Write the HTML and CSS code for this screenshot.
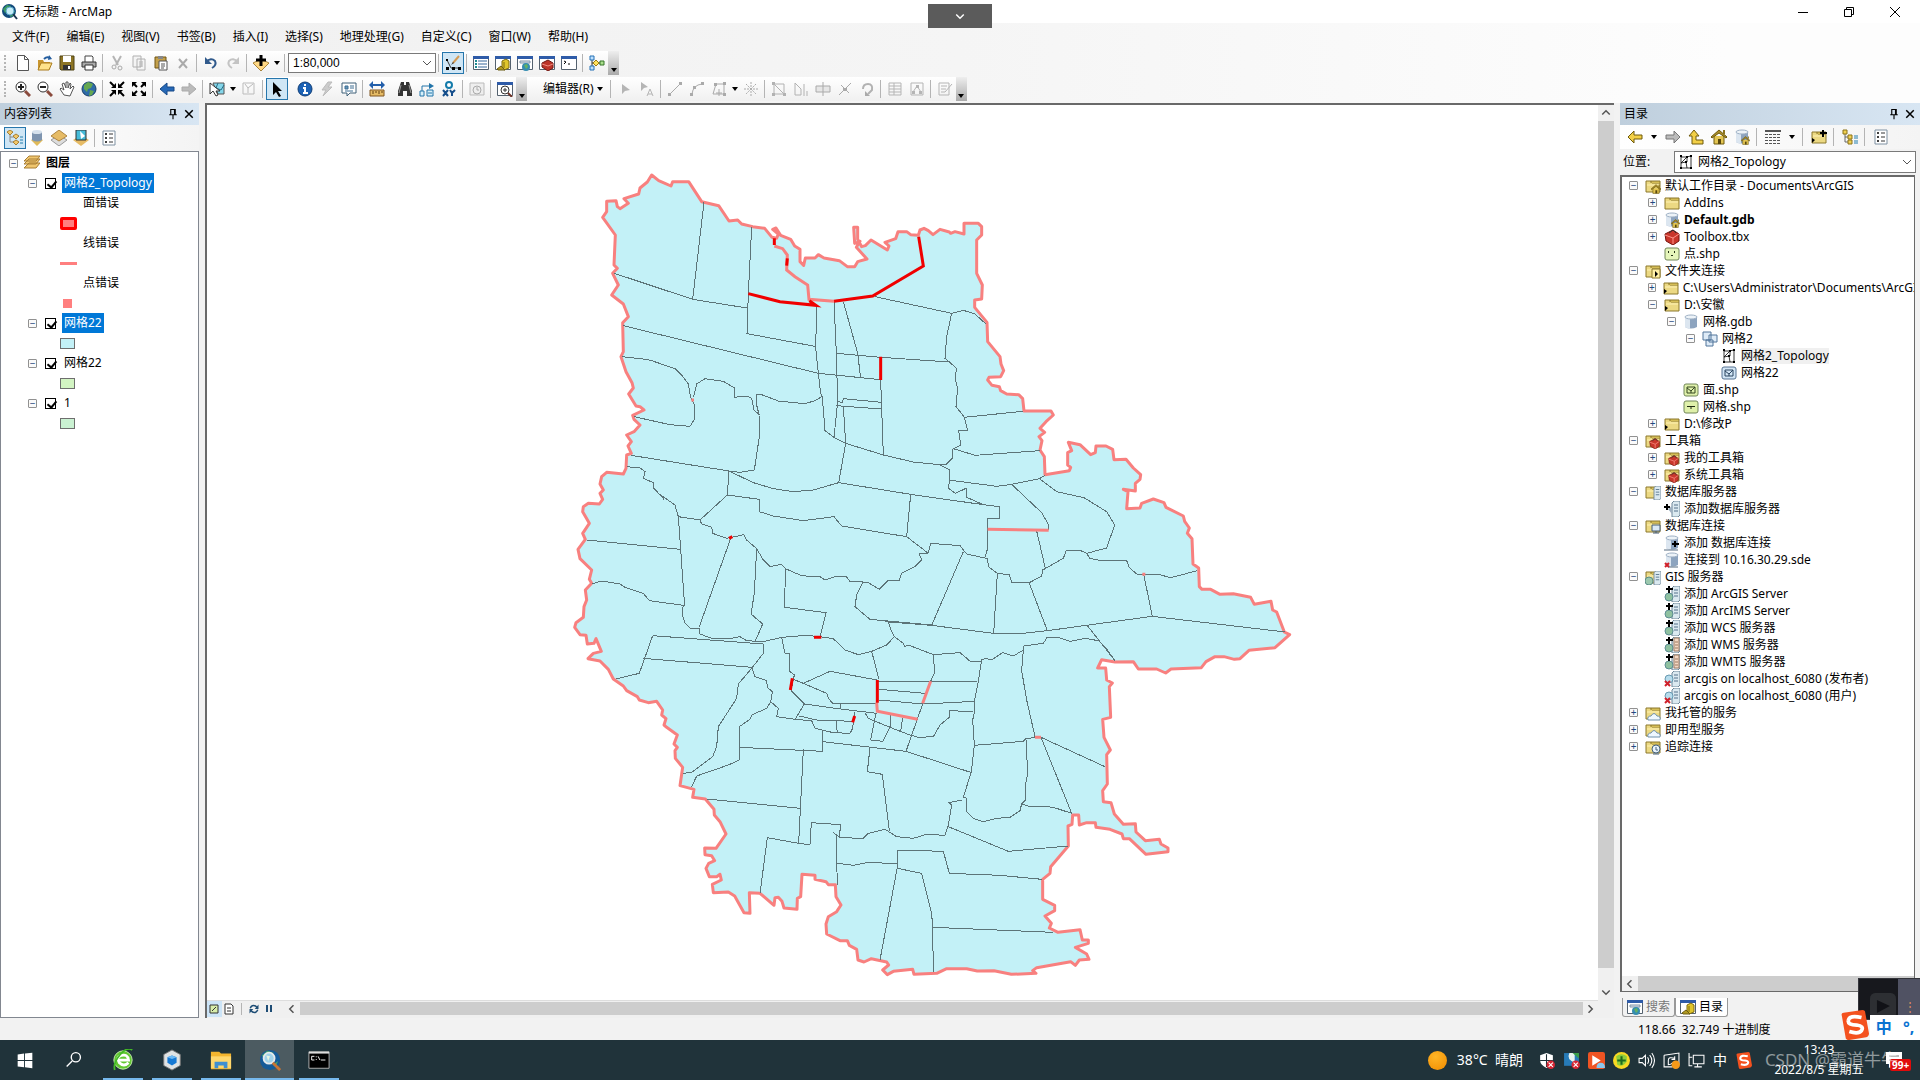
FILE: index.html
```html
<!DOCTYPE html>
<html lang="zh-CN">
<head>
    <meta charset="UTF-8">
    <meta name="viewport" content="width=device-width, initial-scale=1.0">
    <title>无标题 - ArcMap</title>
    <link rel="stylesheet" href="styles.css">
</head>
<body>
    <!-- Icon sprite -->
    <svg class="sprite" aria-hidden="true">
        <symbol id="i-app" viewBox="0 0 16 16"><circle cx="7" cy="7" r="7" fill="#124a7c"/><path d="M1 5l4-4 4 1-2 4-4 3zM9 9l4-2-2 5-3 1z" fill="#3b9a63"/><circle cx="8" cy="7" r="4" fill="#c5ecf8" stroke="#5aa7c8"/><path d="M11 10l4 5" stroke="#1b3550" stroke-width="2"/></symbol>
        <symbol id="i-new" viewBox="0 0 16 16"><path d="M2.500.5h7l4 4v11h-11zM9.500.5v4h4" fill="#fff" stroke="#555"/></symbol>
        <symbol id="i-open" viewBox="0 0 16 16"><path d="M1 14V5h5l1 2h6v7z" fill="#c9962e"/><path d="M1 15l3-7h11l-3 7z" fill="#ffe28a" stroke="#a97b1d"/><path d="M7 4q3-3 6-1" stroke="#235d9f" stroke-width="2" fill="none"/><path d="M12 0l3 4-4 1z" fill="#235d9f"/></symbol>
        <symbol id="i-save" viewBox="0 0 16 16"><path d="M1 1h14v14H2l-1-1z" fill="#8c7424" stroke="#4d4012"/><path d="M4 1h8v6H4z" fill="#fff"/><path d="M4 10h8v5H4z" fill="#333"/><path d="M9 11h2v3H9z" fill="#fff"/></symbol>
        <symbol id="i-print" viewBox="0 0 16 16"><path d="M4 1h7l1 1v6H4z" fill="#fff" stroke="#444"/><path d="M1 7h14v5H1z" fill="#a9a9a9" stroke="#333"/><path d="M4 10h8v5H4z" fill="#fff" stroke="#333"/></symbol>
        <symbol id="i-cut" viewBox="0 0 16 16"><path d="M4 1l5 9M12 1l-5 9" stroke="#b5b5b5" stroke-width="2"/><circle cx="5" cy="12" r="2" fill="none" stroke="#aaa"/><circle cx="11" cy="13" r="2" fill="none" stroke="#aaa"/></symbol>
        <symbol id="i-copy" viewBox="0 0 16 16"><path d="M2 1h8v11H2zM6 4h8v11H6z" fill="#f4f4f4" stroke="#b0b0b0"/><path d="M8 7h4M8 9h4M8 11h4" stroke="#b0b0b0"/></symbol>
        <symbol id="i-paste" viewBox="0 0 16 16"><path d="M2 2h11v11H2z" fill="#c3a04b" stroke="#705413"/><path d="M5 1h5v3H5z" fill="#888"/><path d="M6 6h8v9H6z" fill="#fff" stroke="#555"/><path d="M8 9h4M8 11h4M8 13h3" stroke="#555"/></symbol>
        <symbol id="i-del" viewBox="0 0 16 16"><path d="M4 4l8 9M12 4l-8 9" stroke="#aaa" stroke-width="2"/></symbol>
        <symbol id="i-undo" viewBox="0 0 16 16"><path d="M3 7q5-5 9-1 2 4-3 7" fill="none" stroke="#315a8c" stroke-width="2"/><path d="M2 2v7h7z" fill="#315a8c"/></symbol>
        <symbol id="i-redo" viewBox="0 0 16 16"><path d="M13 7q-5-5-9-1-2 4 3 7" fill="none" stroke="#c4c4c4" stroke-width="2"/><path d="M14 2v7H7z" fill="#c4c4c4"/></symbol>
        <symbol id="i-add" viewBox="0 0 16 16"><path d="M0 8l8-4 8 4-8 8z" fill="#ffd884" stroke="#a8833a"/><path d="M8 0v11M3 5h10" stroke="#000" stroke-width="3"/></symbol>
        <symbol id="i-edit" viewBox="0 0 16 16"><path d="M2 5l4 8h8" stroke="#333" fill="none"/><path d="M8 8l6-7" stroke="#d49b54" stroke-width="2"/><path d="M6 10l2-3 1 1z" fill="#333"/><path d="M1 4h2v2H1zM1 12h3v3H1zM7 12h3v3H7zM13 12h3v3h-3z"/></symbol>
        <symbol id="i-win" viewBox="0 0 16 16"><path d="M.5 1.500h15v13H.5z" fill="#fff" stroke="#54616e"/><path d="M0 1h16v3H0z" fill="#2e5ba8"/></symbol>
        <symbol id="i-toc" viewBox="0 0 16 16"><use href="#i-win"/><path d="M2 6h2M2 9h2M2 12h2" stroke="#208b92" stroke-width="2"/><path d="M5 6h9M5 9h9M5 12h9" stroke="#34669b"/></symbol>
        <symbol id="i-cat" viewBox="0 0 16 16"><use href="#i-win"/><path d="M7 6l4-2 3 2v7l-5 2-2-2z" fill="#e0c52b" stroke="#7d6a10"/><path d="M9 7v6" stroke="#7d6a10"/><path d="M2 14l4-3 4 4H3z" fill="#b29a21" stroke="#6b5c14"/></symbol>
        <symbol id="i-search" viewBox="0 0 16 16"><use href="#i-win"/><path d="M3 6h10v2H3z" fill="#dce5ef" stroke="#8193a6"/><circle cx="9" cy="12" r="4" fill="#358cb0"/><path d="M7 10l3-1 1 3-2 2z" fill="#65b261"/></symbol>
        <symbol id="i-boxwin" viewBox="0 0 16 16"><use href="#i-win"/><path d="M3 8l6-3 5 3v5l-5 3-6-4z" fill="#bd3328" stroke="#711610"/><path d="M3 9l6 2 5-2" fill="none" stroke="#f08c80"/></symbol>
        <symbol id="i-py" viewBox="0 0 16 16"><use href="#i-win"/><path d="M3 6l2 1-2 2M7 9h2" stroke="#000" fill="none"/></symbol>
        <symbol id="i-model" viewBox="0 0 16 16"><path d="M3 3v10M3 8h10" stroke="#333"/><path d="M1 1h4v4H1zM1 11h4v4H1z" fill="#bfe1ff" stroke="#2471b5"/><path d="M7 5l3 3-3 3-3-3z" fill="#ffe15b" stroke="#9b7b16"/><path d="M11 6h4v4h-4z" fill="#aadf8c" stroke="#36752a"/></symbol>
        <symbol id="i-zin" viewBox="0 0 16 16"><circle cx="6" cy="6" r="5" fill="#fff" stroke="#333"/><path d="M3 6h6M6 3v6" stroke="#222" stroke-width="2"/><path d="M10 10l5 5" stroke="#8a4a3c" stroke-width="3"/></symbol>
        <symbol id="i-zout" viewBox="0 0 16 16"><circle cx="6" cy="6" r="5" fill="#fff" stroke="#333"/><path d="M3 6h6" stroke="#222" stroke-width="2"/><path d="M10 10l5 5" stroke="#8a4a3c" stroke-width="3"/></symbol>
        <symbol id="i-hand" viewBox="0 0 16 16"><path d="M5 14L1 8l1-1 3 2-2-6 2-1 2 5V1h2v6l2-5 1 1-1 5 3-3 1 1-4 9z" fill="#fff" stroke="#555"/></symbol>
        <symbol id="i-globe" viewBox="0 0 16 16"><circle cx="8" cy="8" r="7" fill="#2e6ba8" stroke="#193e68"/><path d="M3 4l4-3 5 2-2 4-3 1-1 3-3-3zM9 9l4 1-2 4-3 1z" fill="#65a750"/></symbol>
        <symbol id="i-fin" viewBox="0 0 16 16"><path d="M1 1l5 5M15 1l-5 5M1 15l5-5M15 15l-5-5" stroke="#000" stroke-width="2"/><path d="M2 7h5V2zM9 2v5h5zM2 9h5v5zM9 14V9h5z"/></symbol>
        <symbol id="i-fout" viewBox="0 0 16 16"><path d="M2 2l4 4M14 2l-4 4M2 14l4-4M14 14l-4-4" stroke="#000" stroke-width="2"/><path d="M1 1h5L1 6zM10 1h5v5zM1 10v5h5zM15 10v5h-5z"/></symbol>
        <symbol id="i-back" viewBox="0 0 16 16"><path d="M1 8l7-6v4h7v4H8v4z" fill="#2769b7" stroke="#164987"/></symbol>
        <symbol id="i-fwd" viewBox="0 0 16 16"><path d="M15 8L8 2v4H1v4h7v4z" fill="#bbb" stroke="#aaa"/></symbol>
        <symbol id="i-sel" viewBox="0 0 16 16"><path d="M4 2h11v11H9z" fill="#84d6ea" stroke="#555"/><path d="M9 2l-2 5 5 2 3-5" stroke="#286d84" fill="none"/><path d="M1 2v11l3-3 3 5 2-1-2-4h4z" fill="#fff" stroke="#333"/></symbol>
        <symbol id="i-clr" viewBox="0 0 16 16"><path d="M2 2h11v11H2zM4 3l3 4 5-4M7 7v5" fill="none" stroke="#bbb"/></symbol>
        <symbol id="i-arrow" viewBox="0 0 16 16"><path d="M4 1v13l3-3 3 5 2-1-3-5h4z"/></symbol>
        <symbol id="i-info" viewBox="0 0 16 16"><circle cx="8" cy="8" r="7" fill="#1c62b5" stroke="#103d75"/><path d="M8 3v2M6 7h2v5M6 12h5" stroke="#fff" stroke-width="2" fill="none"/></symbol>
        <symbol id="i-bolt" viewBox="0 0 16 16"><path d="M9 1L3 9h4l-3 6 9-9H9l4-5z" fill="#ccc" stroke="#bbb"/></symbol>
        <symbol id="i-html" viewBox="0 0 16 16"><path d="M1 2h14v10H9l-3 3v-3H1z" fill="#fff" stroke="#3f6179"/><path d="M4 5h3v3H4zM9 5h4M9 7h4M4 10h8" fill="#6396bb" stroke="#3f6f93"/></symbol>
        <symbol id="i-meas" viewBox="0 0 16 16"><path d="M1 9h14v6H1z" fill="#e5bb65" stroke="#7f5520"/><path d="M4 10v3M7 10v2M10 10v3M13 10v2" stroke="#5e3c10"/><path d="M2 4h12" stroke="#225eaa" stroke-width="2"/><path d="M0 4l4-4v8zM16 4l-4-4v8z" fill="#225eaa"/></symbol>
        <symbol id="i-find" viewBox="0 0 16 16"><path d="M4 1h3v3h2V1h3l3 9v5h-5v-5H6v5H1v-5z" fill="#333"/><path d="M4 4l-2 8M12 4l2 8" stroke="#999"/></symbol>
        <symbol id="i-route" viewBox="0 0 16 16"><path d="M3 10V5h8" fill="none" stroke="#2274a9"/><path d="M10 2l5 3-5 3z" fill="#2274a9"/><path d="M1 10h4v5H1zM8 9h6v6H8z" fill="#d7f0fa" stroke="#2274a9"/><path d="M9 12h4" stroke="#2274a9"/></symbol>
        <symbol id="i-xy" viewBox="0 0 16 16"><circle cx="8" cy="4" r="3" fill="#fff" stroke="#147baa" stroke-width="2"/><path d="M2 9l5 6M7 9l-5 6M9 9l2 3 3-3M11 12v3" fill="none" stroke="#164f8c" stroke-width="2"/></symbol>
        <symbol id="i-time" viewBox="0 0 16 16"><path d="M1 2h14v12H1z" fill="#eee" stroke="#bbb"/><circle cx="8" cy="9" r="4" fill="none" stroke="#aaa"/><path d="M8 6v3h2" fill="none" stroke="#aaa"/></symbol>
        <symbol id="i-view" viewBox="0 0 16 16"><use href="#i-win"/><circle cx="8" cy="9" r="4" fill="#fff" stroke="#333"/><path d="M6 9h4M8 7v4" stroke="#333"/><path d="M11 12l4 4" stroke="#6d3328" stroke-width="2"/></symbol>
        <symbol id="i-g-arrow" viewBox="0 0 16 16"><path d="M5 3v10l3-3 5-1z" fill="#b5b5b5"/></symbol>
        <symbol id="i-g-arrowa" viewBox="0 0 16 16"><path d="M2 1v9l3-3 4-1z" fill="#b5b5b5"/><path d="M8 15l3-7 3 7M9 13h4" stroke="#b5b5b5" fill="none"/></symbol>
        <symbol id="i-g-line" viewBox="0 0 16 16"><path d="M3 13L13 3" stroke="#aaa"/><path d="M1 12h3v3H1zM12 1h3v3h-3z" fill="#aaa"/></symbol>
        <symbol id="i-g-curve" viewBox="0 0 16 16"><path d="M3 13Q4 4 13 3" fill="none" stroke="#aaa"/><path d="M1 12h3v3H1zM4 5h3v3H4zM12 1h3v3h-3z" fill="#aaa"/></symbol>
        <symbol id="i-g-poly" viewBox="0 0 16 16"><path d="M5 3h8v10H2zM8 8v7M5 12h6" fill="none" stroke="#aaa"/><path d="M3 2h3v3H3zM12 1h3v3h-3zM12 12h3v3h-3z" fill="#aaa"/></symbol>
        <symbol id="i-g-burst" viewBox="0 0 16 16"><path d="M8 1v14M1 8h14M3 3l10 10M13 3L3 13" stroke="#aaa" stroke-dasharray="2 1"/></symbol>
        <symbol id="i-g-shape" viewBox="0 0 16 16"><path d="M3 3v10h10V3zl10 10" fill="none" stroke="#b2b2b2"/><path d="M1 1h3v3H1zM1 12h3v3H1zM12 12h3v3h-3z" fill="#b2b2b2"/></symbol>
        <symbol id="i-g-tri" viewBox="0 0 16 16"><path d="M2 2v12h6V8zM11 3v12M14 10v5" fill="none" stroke="#b2b2b2"/></symbol>
        <symbol id="i-g-split" viewBox="0 0 16 16"><path d="M1 5h14v6H1zM8 1v14" fill="#e6e6e6" stroke="#aaa"/></symbol>
        <symbol id="i-g-cross" viewBox="0 0 16 16"><path d="M2 14L14 2M4 4l8 8" stroke="#aaa"/><path d="M6 7h4v3H6z" fill="#aaa"/></symbol>
        <symbol id="i-g-rot" viewBox="0 0 16 16"><path d="M4 8q0-5 5-5t4 6l-4 4" fill="none" stroke="#b2b2b2" stroke-width="2"/><path d="M6 10v5h5z" fill="#aaa"/></symbol>
        <symbol id="i-g-table" viewBox="0 0 16 16"><path d="M2 2h12v12H2zM2 5h12M2 8h12M2 11h12M7 2v12" fill="none" stroke="#b5b5b5"/></symbol>
        <symbol id="i-g-net" viewBox="0 0 16 16"><path d="M2 2h12v12H2zM4 11l4-6 4 6" fill="none" stroke="#b5b5b5"/><path d="M7 4h3v3H7zM3 10h3v3H3zM10 10h3v3h-3z" fill="#b5b5b5"/></symbol>
        <symbol id="i-g-form" viewBox="0 0 16 16"><path d="M2 2h10v12H2zM4 5h6M4 8h5M4 11h4M8 11l7-8" fill="none" stroke="#b5b5b5"/></symbol>

        <symbol id="i-treeview" viewBox="0 0 16 16"><path d="M3 3v9h5M3 7h5" fill="none" stroke="#888"/><path d="M0 2l3-2 3 2-3 3zM6 6l3-2 3 2-3 3zM6 12l3-2 3 2-3 3z" fill="#f2c86a" stroke="#a78036"/><path d="M13 7h3M13 10h3M13 13h3" stroke="#247fad"/></symbol>
        <symbol id="i-cattree" viewBox="0 0 16 16"><path d="M3 3v10h4M3 8h4" fill="none" stroke="#666"/><path d="M1 1h4v4H1zM6 6h4v4H6zM6 11h4v4H6z" fill="#f0d052" stroke="#8a7218"/><path d="M12 7h4M12 9h4M12 12h4M12 14h4" stroke="#247fad"/></symbol>
        <symbol id="i-srcview" viewBox="0 0 16 16"><path d="M2 10l6-3 6 3-6 6z" fill="#e0ba59"/><path d="M3 2v8q5 3 10 0V2z" fill="#7f95b0"/><ellipse cx="8" cy="2" rx="5" ry="2" fill="#d7e2ed"/></symbol>
        <symbol id="i-vis" viewBox="0 0 16 16"><path d="M0 10l8-5 8 5-8 6z" fill="#ddd" stroke="#999"/><path d="M0 6l8-6 8 6-8 5z" fill="#e6bb65" stroke="#ae8540"/></symbol>
        <symbol id="i-selview" viewBox="0 0 16 16"><path d="M0 10l8-5 8 5-8 6z" fill="#e6bb65"/><path d="M3 0h10v10H3z" fill="#45bbd8" stroke="#333"/><path d="M7 1l5 5-4 3z" fill="#fff"/></symbol>
        <symbol id="i-opt" viewBox="0 0 16 16"><path d="M2 1h12v14H2z" fill="#fff" stroke="#7f91a2"/><circle cx="5" cy="4" r="1"/><circle cx="5" cy="8" r="1"/><circle cx="5" cy="12" r="1"/><path d="M8 4h4M8 8h4M8 12h4" stroke="#333"/></symbol>
        <symbol id="i-layers" viewBox="0 0 16 16"><path d="M0 13l5-5h11l-4 5zM0 9l5-5h11l-4 5zM0 6l5-5h11l-4 5z" fill="#f0c66e" stroke="#a97e35"/></symbol>

        <symbol id="i-yback" viewBox="0 0 16 16"><path d="M1 8l6-6v4h8v4H7v4z" fill="#f2cf46" stroke="#6f5a0c"/></symbol>
        <symbol id="i-gfwd" viewBox="0 0 16 16"><path d="M15 8L9 2v4H1v4h8v4z" fill="#bbb" stroke="#777"/></symbol>
        <symbol id="i-up" viewBox="0 0 16 16"><path d="M6 1l5 6H8v4h7v4H4V7H1z" fill="#f2cf46" stroke="#6f5a0c"/></symbol>
        <symbol id="i-home" viewBox="0 0 16 16"><path d="M3 7v8h10V7" fill="#e3c552" stroke="#6f5a0c"/><path d="M0 8l8-7 8 7-1 1-7-5-7 5z" fill="#a98d29" stroke="#6f5a0c"/><path d="M7 10h3v5H7z" fill="#59480d"/><path d="M12 1h2v4h-2z" fill="#8b7420"/></symbol>
        <symbol id="i-gdb" viewBox="0 0 16 16"><path d="M2 2v11q6 3 12 0V2z" fill="#8da4bf"/><path d="M2 2v11q3 2 5 2V3z" fill="#dce6f0"/><ellipse cx="8" cy="3" rx="6" ry="2" fill="#edf3f8" stroke="#9eb0c4"/></symbol>
        <symbol id="i-gdbhome" viewBox="0 0 16 16"><use href="#i-gdb"/><use href="#i-home" x="7" y="7" width="9" height="9"/></symbol>
        <symbol id="i-grid" viewBox="0 0 16 16"><path d="M0 1h16v2H0z" fill="#555"/><path d="M0 5.500h16M0 8.500h16M0 11.500h16M0 14.500h16" stroke="#555" stroke-dasharray="3 1"/></symbol>
        <symbol id="i-folder" viewBox="0 0 16 16"><path d="M1 14V3h5l1 2h8v9z" fill="#ecd983" stroke="#8c792d"/><path d="M6 5V3h9v2" fill="#d4bd56" stroke="#8c792d"/><path d="M2 7h12" stroke="#fff2b5"/></symbol>
        <symbol id="i-fconn" viewBox="0 0 16 16"><use href="#i-folder"/><path d="M1 9l3 2-3 3z"/></symbol>
        <symbol id="i-fadd" viewBox="0 0 16 16"><use href="#i-fconn"/><path d="M12 1v7M9 4h7" stroke="#000" stroke-width="2"/></symbol>
        <symbol id="i-fhome" viewBox="0 0 16 16"><use href="#i-folder"/><use href="#i-home" x="6" y="6" width="10" height="10"/></symbol>
        <symbol id="i-ffold" viewBox="0 0 16 16"><use href="#i-folder"/><path d="M7 6h8v9H7z" fill="#fff0a6" stroke="#8c792d"/><path d="M10 8l3 3-3 3z"/></symbol>
        <symbol id="i-tbx" viewBox="0 0 16 16"><path d="M1 5l8-4 6 4v7l-6 4-7-4z" fill="#c9372c" stroke="#79150e"/><path d="M1 6l8 3 6-4M9 9v6" fill="none" stroke="#ff968a"/><path d="M5 4l4-3 3 3" fill="none" stroke="#333"/></symbol>
        <symbol id="i-fbox" viewBox="0 0 16 16"><use href="#i-folder"/><use href="#i-tbx" x="4" y="5" width="11" height="11"/></symbol>
        <symbol id="i-shp-pt" viewBox="0 0 16 16"><rect x="1" y="2" width="14" height="12" rx="2" fill="#e5f5ba" stroke="#718659"/><path d="M4 5h1v2H4zM10 5h1v2h-1zM7 9h2v1H7z" fill="#243018"/></symbol>
        <symbol id="i-shp-pg" viewBox="0 0 16 16"><rect x="1" y="2" width="14" height="12" rx="2" fill="#dff0aa" stroke="#718659"/><path d="M4 5h8v6H4zM4 6l4 3 4-4M8 9v2" fill="none" stroke="#344721"/></symbol>
        <symbol id="i-shp-ln" viewBox="0 0 16 16"><rect x="1" y="2" width="14" height="12" rx="2" fill="#dff0aa" stroke="#718659"/><path d="M4 7.500h8M8 8v2" fill="none" stroke="#1e2913"/></symbol>
        <symbol id="i-fc" viewBox="0 0 16 16"><rect x="1" y="2" width="14" height="12" rx="2" fill="#d2e5f5" stroke="#567392"/><path d="M4 5h8v6H4zM4 6l4 3 4-4M8 9v2" fill="none" stroke="#2c4661"/></symbol>
        <symbol id="i-fds" viewBox="0 0 16 16"><path d="M1 1h8v8H1zM7 4h8v7H7zM4 9h7v6H4z" fill="#deebf7" stroke="#50749a"/></symbol>
        <symbol id="i-topo" viewBox="0 0 16 16"><path d="M3 2v12M3 3h5l5-1v12H3M9 3l-6 6 5-1 1 6M9 3v5" fill="none" stroke="#000" stroke-width=".8"/><path d="M2 1h2v2H2zM8 2h2v2H8zM12 1h2v2h-2zM2 13h2v2H2zM12 13h2v2h-2zM7 7h2v2H7z"/></symbol>
        <symbol id="i-srv" viewBox="0 0 16 16"><path d="M8 2l2-2h6v14l-2 2H8z" fill="#dbe9f0" stroke="#6e8698"/><path d="M10 4h4M10 7h4M10 10h4" stroke="#54718a"/></symbol>
        <symbol id="i-fsrv" viewBox="0 0 16 16"><use href="#i-folder"/><use href="#i-srv" x="2" y="2" width="14" height="14"/></symbol>
        <symbol id="i-fdb" viewBox="0 0 16 16"><use href="#i-folder"/><path d="M7 7h8v6H7z" fill="#dbe9f5" stroke="#475d75"/><path d="M11 13v2M8 15h6" stroke="#475d75"/></symbol>
        <symbol id="i-fgis" viewBox="0 0 16 16"><use href="#i-fsrv"/><circle cx="4" cy="12" r="4" fill="#9cc8ae" stroke="#5b8d87"/></symbol>
        <symbol id="i-fcloud" viewBox="0 0 16 16"><use href="#i-folder"/><path d="M3 15q-1-4 3-4 3-5 6 0 4 0 3 4z" fill="#eef7ff" stroke="#6e91ad"/></symbol>
        <symbol id="i-ftrack" viewBox="0 0 16 16"><use href="#i-folder"/><circle cx="11" cy="10" r="4" fill="#e7f2fb" stroke="#46627c"/><path d="M11 8v3h2M8 15h6" fill="none" stroke="#46627c"/></symbol>
        <symbol id="i-addsrv" viewBox="0 0 16 16"><use href="#i-srv"/><path d="M8 5L4 8l4 5" fill="#9fb0c0"/><path d="M3 3v6M0 6h6" stroke="#000" stroke-width="2"/></symbol>
        <symbol id="i-adddb" viewBox="0 0 16 16"><use href="#i-gdb"/><path d="M0 15h14" stroke="#556b80"/><path d="M11 6v6M8 9h7" stroke="#000" stroke-width="2"/></symbol>
        <symbol id="i-sde" viewBox="0 0 16 16"><use href="#i-gdb"/><path d="M4 15h10" stroke="#556b80"/><path d="M1 11l4 4M5 11l-4 4" stroke="#d0202a" stroke-width="2"/></symbol>
        <symbol id="i-addgis" viewBox="0 0 16 16"><use href="#i-srv"/><circle cx="5" cy="11" r="4" fill="#8fc1a0" stroke="#5d8d94"/><path d="M5 0v7M2 3h7" stroke="#000" stroke-width="2"/></symbol>
        <symbol id="i-addwms" viewBox="0 0 16 16"><use href="#i-addgis"/><path d="M10 1h5v13h-5z" fill="#f3d8c4" stroke="#9b7960"/><path d="M11 5h3M11 8h3M11 11h3" stroke="#9b7960"/></symbol>
        <symbol id="i-gisx" viewBox="0 0 16 16"><use href="#i-srv"/><circle cx="5" cy="8" r="4" fill="#b7dcec" stroke="#6799b0"/><path d="M1 10l5 5M6 10l-5 5" stroke="#d0202a" stroke-width="2"/></symbol>
        <symbol id="i-pin" viewBox="0 0 16 16"><path d="M5 2h6v7H5zM3 9h10M8 9v6M10 2v7" fill="none" stroke="#000" stroke-width="1.500"/></symbol>
        <symbol id="i-x" viewBox="0 0 16 16"><path d="M3 3l10 10M13 3L3 13" stroke="#000" stroke-width="2"/></symbol>
        <symbol id="i-chev" viewBox="0 0 16 16"><path d="M3 6l5 5 5-5" fill="none" stroke="currentColor" stroke-width="2"/></symbol>
        <symbol id="i-drop" viewBox="0 0 8 8"><path d="M1 2h6L4 6z" fill="currentColor"/></symbol>
        <symbol id="i-refresh" viewBox="0 0 16 16"><path d="M3 7q2-5 7-3l2 2M13 9q-2 5-7 3l-2-2" fill="none" stroke="#1e4d75" stroke-width="2"/><path d="M14 2v6H9zM2 14V8h5z" fill="#1e4d75"/></symbol>
        <symbol id="i-sogou" viewBox="0 0 32 32"><path d="M3 6Q2 3 5 3l20-3q3 0 3 3l4 22q0 3-3 4L11 32q-4 0-4-3z" fill="#f4511e"/><path d="M24 8q-13-3-14 3-1 5 9 5 8 1 5 6-3 4-13 1" fill="none" stroke="#fff" stroke-width="4"/></symbol>
    </svg>

    <header class="app-header">
        <div class="title-bar">
            <svg class="icon"><use href="#i-app"/></svg>
            <h1>无标题 - ArcMap</h1>
            <div class="window-buttons">
                <button aria-label="最小化"><svg viewBox="0 0 12 12"><path d="M1 6.500h10"/></svg></button>
                <button aria-label="还原"><svg viewBox="0 0 12 12"><path d="M1.500 3.500h7v7h-7zM3.500 3.500v-2h7v7h-2"/></svg></button>
                <button aria-label="关闭"><svg viewBox="0 0 12 12"><path d="M1 1l10 10M11 1L1 11"/></svg></button>
            </div>
        </div>
        <button class="remote-tab" aria-label="展开"><svg class="icon"><use href="#i-chev"/></svg></button>
        <nav class="menu-bar">
            <button>文件(F)</button><button>编辑(E)</button><button>视图(V)</button><button>书签(B)</button><button>插入(I)</button><button>选择(S)</button><button>地理处理(G)</button><button>自定义(C)</button><button>窗口(W)</button><button>帮助(H)</button>
        </nav>
        <div class="toolbar">
            <span class="tools" data-tools="new open save print | cut copy paste del | undo redo | add v |"></span>
            <select class="scale" aria-label="比例尺"><option>1:80,000</option></select>
            <span class="tools" data-tools="| edit* | toc cat search boxwin py | model"></span>
            <span class="cap"></span>
        </div>
        <div class="toolbar">
            <span class="tools" data-tools="zin zout hand globe | fin fout | back fwd | sel v clr | arrow* _ info bolt html | meas _ find route xy | time | view"></span>
            <span class="cap"></span>
            <button class="editor-menu">编辑器(R)<svg class="drop"><use href="#i-drop"/></svg></button>
            <span class="tools" data-tools="| g-arrow g-arrowa | g-line g-curve g-poly v g-burst | g-shape g-tri g-split g-cross g-rot | g-table g-net | g-form"></span>
            <span class="cap"></span>
        </div>
    </header>

    <main class="workspace">
        <section class="panel contents">
            <div class="panel-title"><h2>内容列表</h2><button aria-label="固定"><svg><use href="#i-pin"/></svg></button><button aria-label="关闭"><svg><use href="#i-x"/></svg></button></div>
            <div class="panel-tools"><span class="tools" data-tools="treeview* srcview vis selview | opt"></span></div>
            <ul class="layers">
                <li><button class="expander">−</button><svg class="icon"><use href="#i-layers"/></svg><b>图层</b></li>
                <li class="layer"><button class="expander">−</button><input type="checkbox" id="layer1" checked><label for="layer1" class="selected">网格2_Topology</label></li>
                <li class="legend-text">面错误</li>
                <li class="legend"><span class="swatch area-error"></span></li>
                <li class="legend-text">线错误</li>
                <li class="legend"><span class="swatch line-error"></span></li>
                <li class="legend-text">点错误</li>
                <li class="legend"><span class="swatch point-error"></span></li>
                <li class="layer"><button class="expander">−</button><input type="checkbox" id="layer2" checked><label for="layer2" class="selected">网格22</label></li>
                <li class="legend"><span class="swatch blue"></span></li>
                <li class="layer"><button class="expander">−</button><input type="checkbox" id="layer3" checked><label for="layer3">网格22</label></li>
                <li class="legend"><span class="swatch green"></span></li>
                <li class="layer"><button class="expander">−</button><input type="checkbox" id="layer4" checked><label for="layer4">1</label></li>
                <li class="legend"><span class="swatch mint"></span></li>
            </ul>
        </section>

        <section class="map-frame">
            <svg class="map" viewBox="-1059 -165 4173 2685" role="img" aria-label="网格拓扑地图">
                <polygon class="outline" points="275,45 296,62 315,70 333,78 338,65 386,65 425,125 476,137 507,183 533,180 545,192 578,200 614,205 636,232 650,235 655,222 638,208 648,204 662,226 692,238 704,258 720,268 720,305 731,316 736,294 765,294 775,284 792,294 838,302 862,320 884,320 893,305 921,297 889,262 900,244 884,250 881,202 893,202 893,238 905,260 916,257 933,240 982,270 987,258 975,247 1007,236 1014,215 1040,215 1052,224 1075,226 1080,210 1092,205 1105,212 1119,224 1140,208 1168,216 1172,220 1185,215 1212,222 1212,190 1255,190 1265,200 1265,225 1250,240 1250,340 1267,375 1265,417 1244,420 1244,442 1281,487 1283,545 1320,590 1323,612 1331,632 1322,650 1287,652 1283,660 1296,676 1318,680 1322,692 1340,702 1376,704 1388,716 1392,753
                    1473,753 1480,765 1458,785 1440,805 1454,817 1437,830 1446,842 1440,870 1453,890 1455,944 1528,932 1532,922 1523,915 1523,878 1535,872 1525,847 1560,854 1592,884 1606,878 1608,858 1638,858 1658,868 1662,899 1698,898 1720,924 1742,944 1740,958 1726,970 1726,993 1690,988 1704,995 1700,1046 1740,1044 1745,1030 1780,1017 1812,1028 1818,1042 1870,1068 1874,1084 1888,1104 1882,1120 1896,1136 1899,1212 1916,1224 1918,1280 1926,1288 1952,1288 1980,1303 2020,1301 2072,1312 2083,1333 2133,1324 2138,1350 2150,1356 2173,1416 2189,1424
                    2145,1463 2067,1471 2040,1496 2023,1498 1992,1490 1965,1490 1938,1505 1924,1523 1833,1527 1817,1539 1790,1527 1735,1527 1720,1505 1665,1506 1625,1499 1613,1524 1637,1524 1640,1560 1657,1569 1648,1580 1652,1672 1628,1678 1632,1732 1651,1770 1640,1784 1642,1872 1628,1892 1630,1925 1653,1928 1663,1962 1690,1993 1726,1991 1728,2016 1756,2042 1798,2038 1803,2052 1824,2064 1824,2075 1758,2083 1708,2036 1690,2036 1686,2022 1650,2008 1608,2002 1606,1988 1580,1988 1558,1995 1556,1965 1538,1965 1536,1993 1524,1998 1525,2058 1472,2120 1470,2140 1448,2158 1448,2218 1484,2236 1484,2252 1455,2268 1474,2290 1468,2304 1494,2317 1560,2309 1567,2340 1585,2340 1585,2350 1546,2362 1580,2382 1587,2398 1558,2400 1546,2416 1532,2405 1430,2423 1418,2432 1428,2440 1354,2443 1302,2432 1252,2433 1220,2426 1160,2426 1130,2440 1062,2443 1058,2428 1000,2434 982,2444 968,2430 986,2415 980,2406 934,2396 912,2406 894,2400 890,2368 868,2356 862,2342 840,2342 800,2322
                    798,2292 805,2270 830,2255 843,2235 828,2210 826,2174 805,2174 798,2165 765,2158 765,2146 726,2143 722,2210 712,2215 711,2248 672,2244 666,2224 655,2212 645,2213 642,2236 600,2200 568,2198 570,2260 552,2258 524,2208 505,2196 460,2198 457,2173 484,2160 480,2143 470,2150 448,2150 438,2125 446,2110 464,2102 455,2087 435,2084 434,2064 468,2065 498,2022 480,1985 463,1965 462,1948 436,1917 398,1912 402,1888 360,1877 368,1822 346,1795 345,1772 352,1762 342,1752 352,1725 320,1702 312,1695 318,1676 305,1665 308,1650 290,1624 265,1628 238,1620 232,1610 200,1592 190,1578 160,1557 145,1528 120,1503 84,1496 100,1480 124,1474 108,1436 102,1450 82,1452 78,1426 60,1424 44,1402 48,1388 70,1372 72,1340 80,1320 76,1290 95,1270 88,1258 95,1230 60,1196 54,1168 76,1138 68,1120 88,1090 68,1055 70,1040 85,1030 118,1032 128,1018
                    120,1000 130,990 120,972 125,950 140,937 190,942 198,925 200,885 214,880 204,858 214,845 200,825 222,815 240,795 222,778 218,766 252,750 240,740 228,738 206,702 220,684 216,668 198,635 183,590 190,575 188,488 205,470 190,432 155,405 175,375 158,340 172,325 162,315 166,225 128,172 140,155 140,124 168,122 172,140 180,146 205,130 192,116 236,102 240,84 262,66"/>
                <g class="parcels">
                    <!-- north -->
                    <path d="M432,127 398,418M163,340 398,418 561,444M575,200 565,400 561,521 765,559M190,497 775,640 962,659M186,590 258,598 275,602 345,626 365,645 385,672 392,712 404,735 405,775 390,799 330,794 222,770M400,712 410,672 435,656 490,664 525,685 523,712 560,708 575,715 582,750 597,763 590,735 588,705 605,704 655,723 735,731 765,722 785,710M597,763 598,830 583,930 540,937 507,933 213,886M770,440 769,515 765,545 775,640 782,700 787,712 795,812 822,832 857,850 970,885 1060,906 1138,914M822,425 829,580 833,725 822,832M850,425 893,580 902,655M829,580 962,592 1170,606"/>
                    <path d="M945,410 1175,460 1160,530 1155,595 1190,625 1185,655 1193,685 1188,740 1212,770 1223,810 1196,812 1202,855 1177,868 1177,895 1160,912 1138,914 1170,930 1166,985 1186,1000 1218,985 1220,1012 1270,1034M1175,460 1210,451 1245,462 1278,492M1212,772 1388,754M962,659 970,885M833,725 848,727 850,716 964,727M829,737 964,747M850,737 857,850 836,968M507,933 580,968 640,986 700,995 760,990 836,968 1052,1003M507,933 502,1005M1180,866 1245,886 1440,872M1166,960 1310,979 1355,973 1438,956 1455,946M200,920 240,924 255,935 250,955 280,968 282,985 312,1018"/>
                    <!-- east -->
                    <path transform="translate(900 120)" d="M150,883 370,914 418,920 418,955 383,955 383,1045 375,1072M152,884 140,1010 205,1060M455,853 545,938 566,975 566,990M538,836 590,875 672,893 740,935 764,975 740,1044 680,1060M205,1060 212,1030 300,1037 320,1062 383,1076 385,1100 412,1120 448,1124 455,1147 510,1147 545,1128 548,1110 610,1075 618,1053 660,1051 680,1060 690,1075 720,1081 800,1082 808,1103 830,1122 895,1123 932,1133 1012,1112M310,1055 215,1276M412,1120 401,1300M508,1150 562,1292M530,993 556,1105M851,1123 877,1249M75,1265 215,1276 400,1300 490,1300 562,1292 877,1249 1275,1296M205,1060 178,1062 185,1080 165,1100 125,1120 118,1140 85,1140 58,1168 25,1148 0,1145"/>
                    <!-- south west -->
                    <path transform="translate(0 960)" d="M282,25 295,40 345,75 355,110 362,208 374,378M355,110 420,120 425,132 455,142 458,160 500,175 552,164 560,180 590,206 610,240 630,260 665,253 676,266 720,285 750,290 780,290 795,300 830,288 858,288 870,305 910,305M502,45 420,120M502,45 598,58 598,95 640,108 730,122 822,110 845,138 1040,170M512,175 418,440M590,206 583,340 573,402 608,432 585,485M676,266 674,382 798,398 780,470M82,180 362,208M95,312 125,303 180,312 195,322 250,340 268,362 370,376 366,400 375,430 390,444 418,445 420,462 460,477 520,474 540,470 560,482 610,485 665,472 740,466 780,470 820,476 855,510 895,524 935,514 980,495 1003,470M278,467 610,492 610,520 575,565 535,612 530,655 475,740 470,800 458,830 395,877 370,880M278,467 238,580 168,597M250,535 575,562 585,590 620,602 622,622 637,635 632,665 620,685 575,705 570,718 538,740 538,840 505,855 410,888 395,920"/>
                    <path transform="translate(0 960)" d="M632,665 655,685 650,710 705,718 755,722 765,745 820,758 870,760 878,745 884,695M665,472 675,520 688,520 690,575 703,585 693,632 733,672 705,718M700,598 730,610 800,640 805,655 818,670 952,670M730,610 810,574 952,600M935,514 957,598M952,604 1252,604M957,628 1095,640M957,660 1090,672 1245,664M733,672 842,687 950,700M842,670V687M718,708 770,720 878,724M828,722 832,758M788,752 788,814 538,802M788,785 1038,814 1232,877M730,808 716,1090M442,957 720,985M600,1240 622,1073 716,1090 750,1094 754,1028 842,1034 838,1070M930,803 922,875 967,883 988,1052M820,1058 840,1073 910,1075 925,1060 975,1048 1010,1070 1060,1075 1100,1063 1155,1066 1165,1035 1175,975 1168,968 1205,960M828,1060 832,1215M832,1150 880,1156 920,1148 1012,1150M1085,1180 1012,1165 1012,1110 1150,1114 1168,1180"/>
                    <path transform="translate(0 960)" d="M948,700 932,780 968,784 990,740 993,705M915,698 925,715 990,742 1050,765 1075,772 1120,770 1140,735 1168,712 1168,692 1240,695M1028,715 1022,752M1088,672 1038,814M1120,524 1124,578 1112,604M910,305 890,345 885,380 930,418 1115,435M985,427 995,455 1003,470 1030,490 1035,500 1045,495 1120,524 1200,518 1232,545 1264,546"/>
                    <!-- south east -->
                    <path transform="translate(840 1320)" d="M425,178 440,176 455,180 488,158 520,168 550,150 552,138 610,130 620,114 655,112 690,124 735,115 775,122 795,140 825,182M742,77 825,182M550,150 545,212 560,300 585,410M425,178 415,245 403,305 405,330 398,360 403,436 394,515 370,592M403,436 550,424 558,415 603,412 795,500M603,412 695,640M558,420 563,520 555,560 557,600 545,612 540,632 510,652 470,655 430,665 400,655 380,635 378,592 370,592M545,612 570,620 600,618 640,622 695,640M325,680 505,754 684,738M328,820 480,826 606,838M172,802 120,1080M245,820 275,940 278,985 280,1115M278,982 640,997"/>
                </g>
                <path class="line-errors" d="M643,258 668,266 682,285 680,330 705,350 743,375 747,418 822,424M1283,1108 1466,1111M1747,1243h9M950,1628 952,1654 1073,1678M1112,1564 1088,1630M1425,1732H1443M394,720h8"/>
                <path class="topology-errors" d="M565,401 660,425 768,436 748,422M822,424 938,408 1090,318 1076,230M962,590V660M643,235V255M682,295 680,317M697,1555 691,1590M952,1560V1628M762,1432H784M884,1668 878,1687M507,1135 517,1130"/>
            </svg>
            <div class="scroll-v"><button aria-label="向上滚动"><svg class="up"><use href="#i-chev"/></svg></button><span class="thumb"></span><button aria-label="向下滚动"><svg><use href="#i-chev"/></svg></button></div>
            <div class="view-bar">
                <button class="active" aria-label="数据视图"><svg viewBox="0 0 12 12"><path d="M2 2h8v8H2z" fill="#d8edaa" stroke="#333"/><path d="M4 8l4-4" stroke="#333"/></svg></button>
                <button aria-label="布局视图"><svg viewBox="0 0 12 12"><path d="M2 1h6l2 2v8H2zM4 5h4M4 8h4" fill="#fff" stroke="#333"/></svg></button>
                <i class="sep"></i>
                <button aria-label="刷新"><svg><use href="#i-refresh"/></svg></button>
                <button aria-label="暂停"><svg viewBox="0 0 12 12"><path d="M4 2v7M8 2v7" stroke="#1e4d75" stroke-width="2"/></svg></button>
                <button class="scroll-left" aria-label="向左滚动"><svg class="left"><use href="#i-chev"/></svg></button>
                <span class="thumb"></span>
                <button aria-label="向右滚动"><svg class="right"><use href="#i-chev"/></svg></button>
            </div>
        </section>

        <section class="panel catalog">
            <div class="panel-title"><h2>目录</h2><button aria-label="固定"><svg><use href="#i-pin"/></svg></button><button aria-label="关闭"><svg><use href="#i-x"/></svg></button></div>
            <div class="panel-tools"><span class="tools" data-tools="yback v gfwd up home gdbhome | grid v | fadd | cattree | opt"></span></div>
            <div class="location">
                <label for="location">位置:</label>
                <div class="location-box"><svg class="icon"><use href="#i-topo"/></svg><select id="location"><option>网格2_Topology</option></select></div>
            </div>
            <div class="catalog-body">
                <ul class="tree" id="catalog-tree"></ul>
                <div class="scroll-h"><button aria-label="向左滚动"><svg class="left"><use href="#i-chev"/></svg></button><span class="thumb"></span></div>
            </div>
            <div class="tabs"><button><svg class="icon"><use href="#i-search"/></svg>搜索</button><button class="active"><svg class="icon"><use href="#i-cat"/></svg>目录</button></div>
        </section>
    </main>

    <footer class="status-bar"><span>118.66&nbsp; 32.749 十进制度</span></footer>

    <div class="recorder"><svg viewBox="0 0 30 30"><rect width="30" height="30" rx="6" fill="#2d2f33"/><path d="M8 8l15 7-15 8z" fill="#111217"/></svg><span>⋮</span></div>
    <div class="ime"><svg><use href="#i-sogou"/></svg><div class="ime-bar"><b>中</b><b>°,</b></div></div>

    <div class="taskbar">
        <button aria-label="开始"><svg viewBox="0 0 24 24"><path d="M4 6l7-1v7H4zM12 5l8-1v8h-8zM4 13h7v7l-7-1zM12 13h8v8l-8-1z" fill="#fff"/></svg></button>
        <button aria-label="搜索"><svg viewBox="0 0 24 24"><circle cx="14" cy="9" r="5" fill="none" stroke="#fff" stroke-width="1.500"/><path d="M10 13l-6 6" stroke="#fff" stroke-width="1.500"/></svg></button>
        <button class="running" aria-label="浏览器"><svg viewBox="0 0 24 24"><circle cx="12" cy="12" r="10" fill="#63c832" stroke="#c9efb4"/><path d="M18 15q-5 5-10 0-4-6 2-8 7-2 8 5H7" fill="none" stroke="#fff" stroke-width="3"/><path d="M3 23Q1 15 9 6T22 1" fill="none" stroke="#43b926" stroke-width="2"/></svg></button>
        <button class="running" aria-label="虚拟机"><svg viewBox="0 0 24 24"><path d="M12 1l9 5v12l-9 5-9-5V6z" fill="#dfe3e4" stroke="#777"/><path d="M12 7l5 2v6l-5 3-5-3V9z" fill="#1679d3"/><path d="M12 7l5 2-5 2-5-2z" fill="#6dbaf5"/></svg></button>
        <button class="running" aria-label="文件资源管理器"><svg viewBox="0 0 24 24"><path d="M1 3h9l2 2h11v17H1z" fill="#f4b52e"/><path d="M1 8h22v13H1z" fill="#ffd76d"/><path d="M5 21v-7h14v7h-4v-3H9v3z" fill="#3f8fd1"/></svg></button>
        <button class="running current" aria-label="ArcMap"><svg viewBox="0 0 24 24"><circle cx="12" cy="12" r="11" fill="#145a98"/><path d="M3 7l6-5 7 2-4 5-6 2zM15 17l6-4-3 7z" fill="#489e68"/><circle cx="11" cy="10" r="6" fill="#9fd2ea" stroke="#e4e9ec" stroke-width="2"/><path d="M8 7l4 1-2 5z" fill="#e6f5e2"/><path d="M15 15l8 8" stroke="#c87435" stroke-width="3"/></svg></button>
        <button class="running" aria-label="命令提示符"><svg viewBox="0 0 24 24"><path d="M1 3h22v18H1z" fill="#000" stroke="#b8b8b8"/><path d="M1 3h22v2H1z" fill="#ddd"/><path d="M7 8H4v4h3M9 8v1M9 11v1M11 8l2 4M14 12h5" fill="none" stroke="#fff"/></svg></button>
        <div class="weather"><span class="sun"></span><span>38°C&nbsp; 晴朗</span></div>
        <div class="tray">
            <svg viewBox="0 0 16 16"><path d="M8 1l6 2v5q0 4-6 7-6-3-6-7V3z" fill="#fff"/><path d="M8 2v12M2 8h12" stroke="#203037"/><circle cx="12" cy="12" r="4" fill="#d82735"/><path d="M10 10l4 4M14 10l-4 4" stroke="#fff"/></svg>
            <svg viewBox="0 0 16 16"><path d="M1 1h14v12H1z" fill="#277bb8"/><path d="M6 1q-3 6 5 9V1z" fill="#e8f3ef"/><path d="M9 1h6v5z" fill="#3a9e49"/><circle cx="12" cy="12" r="4" fill="#d82735"/><path d="M10 10l4 4M14 10l-4 4" stroke="#fff"/></svg>
            <svg viewBox="0 0 16 16"><rect width="16" height="16" rx="2" fill="#ef5423"/><path d="M4 3l8 5-8 5z" fill="#fff"/><path d="M8 15q0-5 4-5t4 5z" fill="#8bc8ef"/></svg>
            <svg viewBox="0 0 16 16"><circle cx="8" cy="8" r="8" fill="#f9d923"/><path d="M3 4q5-4 10 0v5q-4 6-9 3z" fill="#8fce3a"/><path d="M8 4v8M4 8h8" stroke="#1f6b1f" stroke-width="2"/></svg>
            <svg viewBox="0 0 16 16"><path d="M1 6h3l3-3v10l-3-3H1zM9 5q2 3 0 6M11 3q4 5 0 10M13 1q5 7 0 14" fill="none" stroke="#fff"/></svg>
            <svg viewBox="0 0 16 16"><path d="M1 3l14-2v11M1 3v11h8M5 8q0-4 6-2M11 4v3H8M5 8v4q3 0 4-2" fill="none" stroke="#fff"/><circle cx="12" cy="12" r="4" fill="#f69a19"/></svg>
            <svg viewBox="0 0 16 16"><path d="M5 3h10v8H5zM9 11v3M6 14h7M1 1v12h3M1 5h3" fill="none" stroke="#fff"/></svg>
            <span>中</span>
            <svg><use href="#i-sogou"/></svg>
        </div>
        <div class="clock"><time>13:43</time><time>2022/8/5 星期五</time></div>
        <div class="notice"><svg viewBox="0 0 20 20"><path d="M2 2h16v12H9l-4 4v-4H2z" fill="#fff"/><path d="M5 6h10M5 10h10" stroke="#777"/></svg><b>99+</b></div>
        <div class="watermark">CSDN @霸道牛牛</div>
    </div>

    <script>
        // Toolbars: "|" separator, "_" gap, "v" drop arrow, "*" pressed
        document.querySelectorAll('.tools').forEach(bar => {
            bar.innerHTML = bar.dataset.tools.split(' ').map(name => {
                if (name === '|') return '<i class="sep"></i>';
                if (name === '_') return '<i class="gap"></i>';
                if (name === 'v') return '<button class="tool-drop" aria-label="更多"><svg class="drop"><use href="#i-drop"/></svg></button>';
                const pressed = name.endsWith('*');
                const id = name.replace('*', '');
                return `<button class="tool${pressed ? ' active' : ''}" aria-label="${id}"><svg class="icon"><use href="#i-${id}"/></svg></button>`;
            }).join('');
        });

        // Catalog rows: depth, expander, icon, name, state
        const rows = [
            [0, '−', 'fhome', '默认工作目录 - Documents\\ArcGIS'],
            [1, '+', 'folder', 'AddIns'],
            [1, '+', 'gdbhome', 'Default.gdb', 'default'],
            [1, '+', 'tbx', 'Toolbox.tbx'],
            [1, '', 'shp-pt', '点.shp'],
            [0, '−', 'ffold', '文件夹连接'],
            [1, '+', 'fconn', 'C:\\Users\\Administrator\\Documents\\ArcGIS'],
            [1, '−', 'fconn', 'D:\\安徽'],
            [2, '−', 'gdb', '网格.gdb'],
            [3, '−', 'fds', '网格2'],
            [4, '', 'topo', '网格2_Topology', 'current'],
            [4, '', 'fc', '网格22'],
            [2, '', 'shp-pg', '面.shp'],
            [2, '', 'shp-ln', '网格.shp'],
            [1, '+', 'fconn', 'D:\\修改P'],
            [0, '−', 'fbox', '工具箱'],
            [1, '+', 'fbox', '我的工具箱'],
            [1, '+', 'fbox', '系统工具箱'],
            [0, '−', 'fsrv', '数据库服务器'],
            [1, '', 'addsrv', '添加数据库服务器'],
            [0, '−', 'fdb', '数据库连接'],
            [1, '', 'adddb', '添加 数据库连接'],
            [1, '', 'sde', '连接到 10.16.30.29.sde'],
            [0, '−', 'fgis', 'GIS 服务器'],
            [1, '', 'addgis', '添加 ArcGIS Server'],
            [1, '', 'addgis', '添加 ArcIMS Server'],
            [1, '', 'addgis', '添加 WCS 服务器'],
            [1, '', 'addwms', '添加 WMS 服务器'],
            [1, '', 'addwms', '添加 WMTS 服务器'],
            [1, '', 'gisx', 'arcgis on localhost_6080 (发布者)'],
            [1, '', 'gisx', 'arcgis on localhost_6080 (用户)'],
            [0, '+', 'fcloud', '我托管的服务'],
            [0, '+', 'fcloud', '即用型服务'],
            [0, '+', 'ftrack', '追踪连接']
        ];
        document.getElementById('catalog-tree').innerHTML = rows.map(([depth, mark, icon, name, state]) =>
            `<li class="depth-${depth}">${mark ? `<button class="expander">${mark}</button>` : '<i class="no-expander"></i>'}<svg class="icon"><use href="#i-${icon}"/></svg><span class="${state || ''}">${name}</span></li>`
        ).join('');
    </script>
</body>
</html>
```
FILE: styles.css
```css
* {
    box-sizing: border-box;
}
body {
    margin: 0;
    height: 100vh;
    display: grid;
    grid-template-rows: auto 1fr 22px 40px;
    overflow: hidden;
    background: #f2f2f2;
    color: #000;
    font: 12px/16px "Noto Sans", "Noto Sans CJK SC", sans-serif;
}
button {
    margin: 0;
    padding: 0;
    border: 0;
    background: none;
    color: inherit;
    font: inherit;
}
select {
    appearance: none;
    margin: 0;
    border: 0;
    background: none;
    color: inherit;
    font: inherit;
}
h1, h2, ul {
    margin: 0;
    padding: 0;
    font-size: 12px;
    font-weight: normal;
    list-style: none;
}
svg {
    display: block;
    flex: none;
}
.sprite {
    position: absolute;
    width: 0;
    height: 0;
}
.icon {
    width: 16px;
    height: 16px;
}
.drop {
    width: 8px;
    height: 8px;
}

/* Title, menu and toolbars */
.app-header {
    height: 103px;
    background: linear-gradient(to right, #f0f0f0, #f5f5f5 50%, #fdfdfd 90%);
}
.title-bar {
    display: flex;
    align-items: center;
    gap: 5px;
    height: 23px;
    padding-left: 2px;
    background: #fff;
}
.window-buttons {
    display: flex;
    margin-left: auto;
    padding-right: 2px;
}
.window-buttons button {
    width: 46px;
    height: 20px;
    display: grid;
    place-items: center;
}
.window-buttons svg {
    width: 12px;
    height: 12px;
    fill: none;
    stroke: #000;
}
.remote-tab {
    position: absolute;
    top: 4px;
    left: 50%;
    width: 64px;
    height: 24px;
    margin-left: -32px;
    display: grid;
    place-items: center;
    background: #5b5b5b;
    color: #fff;
}
.remote-tab svg {
    width: 12px;
    height: 12px;
}
.menu-bar {
    display: flex;
    gap: 17px;
    height: 28px;
    padding-left: 12px;
}
.toolbar {
    display: flex;
    align-items: center;
    width: max-content;
    height: 24px;
    margin-bottom: 2px;
    padding-left: 8px;
    background: linear-gradient(#fff, #f0f0f0);
}
.toolbar::before {
    content: "";
    width: 2px;
    height: 16px;
    margin: 0 4px 0 -4px;
    border-left: 2px dotted #b5b5b5;
}
.tools {
    display: flex;
    align-items: center;
}
.tool {
    width: 22px;
    height: 22px;
    display: grid;
    place-items: center;
}
.tool.active {
    background: #cfe6f5;
    border: 1px solid #2676ac;
}
.tool-drop {
    width: 10px;
    height: 22px;
    display: grid;
    place-items: center;
}
.sep {
    width: 2px;
    height: 18px;
    margin: 0 2px;
    border-left: 1px solid #b4b4b4;
}
.gap {
    width: 6px;
}
.scale {
    width: 148px;
    height: 20px;
    padding: 0 4px;
    border: 1px solid #7a7a7a;
    font: 12px "Liberation Sans", sans-serif;
}
.scale, .location-box {
    background: #fff url("data:image/svg+xml,%3Csvg xmlns='http://www.w3.org/2000/svg' width='10' height='6'%3E%3Cpath d='M1 1l4 4 4-4' fill='none' stroke='%23555'/%3E%3C/svg%3E") no-repeat right 3px center;
}
.cap {
    width: 11px;
    height: 24px;
    background: linear-gradient(#eee, #aaa);
    display: flex;
    align-items: flex-end;
    justify-content: center;
}
.cap::after {
    content: "";
    margin-bottom: 3px;
    border: 3px solid transparent;
    border-top: 4px solid #000;
    border-bottom: 0;
}
.editor-menu {
    display: flex;
    align-items: center;
    gap: 2px;
    margin-left: 16px;
    padding-right: 4px;
}

/* Workspace */
.workspace {
    display: grid;
    grid-template-columns: 199px 1fr 300px;
    gap: 6px;
    min-height: 0;
}
.panel {
    display: flex;
    flex-direction: column;
    min-width: 0;
    min-height: 0;
}
.panel-title {
    display: flex;
    align-items: center;
    height: 22px;
    padding-left: 4px;
    background: linear-gradient(to right, #bfcfdd, #d8e6f3);
}
.panel-title h2 {
    flex: 1;
}
.panel-title svg {
    width: 12px;
    height: 12px;
    margin-right: 4px;
}
.panel-tools {
    display: flex;
    align-items: center;
    height: 26px;
    padding-left: 4px;
    background: linear-gradient(to right, #fff, #f4f4f4);
}
.expander {
    width: 9px;
    height: 9px;
    border: 1px solid #919191;
    border-radius: 1px;
    background: #fafafa;
    color: #224a80;
    font-size: 10px;
    line-height: 7px;
}
.layers {
    flex: 1;
    padding-top: 1px;
    border: 1px solid #828790;
    background: #fff;
}
.layers li {
    display: flex;
    align-items: center;
    gap: 6px;
    height: 20px;
    padding-left: 8px;
}
.layers .layer {
    padding-left: 27px;
}
.layers input {
    appearance: none;
    width: 11px;
    height: 11px;
    margin: 0 0 0 2px;
    border: 1px solid #000;
    background: #fff;
}
.layers input:checked::before {
    content: "";
    display: block;
    width: 4px;
    height: 7px;
    margin-left: 3px;
    border: solid #000;
    border-width: 0 2px 2px 0;
    transform: rotate(40deg);
}
.layers label {
    padding: 2px;
}
.layers label.selected {
    background: #0078d7;
    color: #fff;
}
.layers .legend-text {
    padding-left: 82px;
}
.layers .legend {
    padding-left: 59px;
}
.swatch {
    width: 15px;
    height: 11px;
    border: 1px solid #6e6e6e;
}
.swatch.area-error {
    width: 17px;
    height: 13px;
    border: 3px solid #f00;
    border-radius: 2px;
    background: #ff7f7f;
}
.swatch.line-error {
    width: 17px;
    height: 3px;
    border: 0;
    background: #ff7f7f;
}
.swatch.point-error {
    width: 9px;
    height: 9px;
    margin-left: 3px;
    border: 0;
    background: #ff7f7f;
}
.swatch.blue {
    background: #c3f1f7;
}
.swatch.green {
    background: #d2f4c2;
}
.swatch.mint {
    background: #caf2d2;
}

/* Map view */
.map-frame {
    display: grid;
    grid-template-columns: 1fr 16px;
    grid-template-rows: 1fr 16px;
    min-width: 0;
    min-height: 0;
    padding-bottom: 2px;
    border-top: 2px solid #696969;
    border-left: 2px solid #696969;
    background: #f0f0f0;
}
.map {
    width: 100%;
    height: 100%;
    min-height: 0;
    background: #fff;
}
.outline {
    fill: #c3f1f7;
    stroke: #f8807f;
    stroke-width: 9;
    stroke-linejoin: round;
}
.parcels {
    fill: none;
    stroke: #5c7478;
    stroke-width: 3;
    shape-rendering: crispEdges;
}
.line-errors, .topology-errors {
    fill: none;
    stroke: #f8807f;
    stroke-width: 9;
}
.topology-errors {
    stroke: #f00000;
}
.scroll-v {
    display: flex;
    flex-direction: column;
}
.scroll-v svg, .view-bar svg, .scroll-h svg {
    width: 12px;
    height: 12px;
    margin: 2px;
    color: #555;
}
svg.up {
    transform: rotate(180deg);
}
svg.left {
    transform: rotate(90deg);
}
svg.right {
    transform: rotate(-90deg);
}
.thumb {
    flex: 1;
    background: #cdcdcd;
}
.scroll-v .thumb {
    margin-bottom: 16px;
}
.view-bar {
    display: flex;
    align-items: center;
    height: 16px;
    border-top: 1px solid #ddd;
}
.view-bar button {
    width: 15px;
}
.view-bar .active {
    background: #cce4f7;
}
.view-bar svg {
    margin: 2px 1px;
}
.view-bar .sep {
    height: 12px;
    margin: 0 4px;
}
.view-bar .scroll-left {
    margin-left: 8px;
}
.view-bar .thumb {
    height: 13px;
}

/* Catalog */
.catalog .panel-tools {
    height: 24px;
    padding-left: 3px;
}
.catalog .tool {
    width: 23px;
}
.catalog .tool-drop {
    width: 15px;
}
.catalog .tools .sep {
    margin: 0 3px;
}
.location {
    display: flex;
    align-items: center;
    height: 25px;
    padding: 0 4px 0 3px;
}
.location label {
    flex: 0 0 51px;
}
.location-box {
    flex: 1;
    display: flex;
    align-items: center;
    height: 22px;
    padding-left: 3px;
    border: 1px solid #7a7a7a;
}
.location-box select {
    flex: 1;
    padding-left: 4px;
}
.catalog-body {
    flex: 1;
    display: flex;
    flex-direction: column;
    min-height: 0;
    margin: 1px 5px 6px 0;
    border: solid #696969;
    border-width: 2px 1px 1px 2px;
    background: #fff;
}
.tree {
    flex: 1;
    overflow: hidden;
}
.tree li {
    display: flex;
    align-items: center;
    height: 17px;
    padding-left: 7px;
    white-space: nowrap;
}
.tree .icon {
    margin: 0 4px 0 7px;
}
.tree .no-expander {
    width: 9px;
}
.tree .depth-1 {
    padding-left: 26px;
}
.tree .depth-2 {
    padding-left: 45px;
}
.tree .depth-3 {
    padding-left: 64px;
}
.tree .depth-4 {
    padding-left: 83px;
}
.tree .default {
    font-weight: bold;
}
.tree .current {
    background: #f0f0f0;
}
.scroll-h {
    display: flex;
    height: 15px;
    background: #f0f0f0;
}
.tabs {
    display: flex;
    height: 20px;
    padding: 0 0 1px 2px;
}
.tabs button {
    display: flex;
    align-items: center;
    gap: 3px;
    padding: 0 4px;
    border: 1px solid #999;
    border-top: 0;
    border-radius: 0 0 3px 3px;
    color: #777;
}
.tabs .active {
    background: #fff;
    color: #000;
}

/* Status bar and floating tools */
.status-bar {
    padding-top: 4px;
    padding-left: calc(100% - 282px);
}
.recorder {
    position: absolute;
    right: 0;
    bottom: 60px;
    width: 62px;
    height: 42px;
    display: flex;
    align-items: flex-end;
    justify-content: space-between;
    padding-left: 9px;
    border: 1px solid #33343a;
    background: #17181d;
}
.recorder svg {
    width: 30px;
    height: 26px;
}
.recorder span {
    height: 40px;
    padding: 20px 6px 0;
    background: #505263;
    color: #d98a62;
}
.ime {
    position: absolute;
    right: 0;
    bottom: 40px;
    width: 82px;
    height: 30px;
    display: flex;
    align-items: flex-end;
}
.ime svg {
    width: 32px;
    height: 30px;
}
.ime-bar {
    flex: 1;
    display: flex;
    justify-content: space-around;
    height: 25px;
    background: #fff;
    color: #0a72d1;
    font-size: 16px;
    line-height: 24px;
}

/* Taskbar */
.taskbar {
    position: relative;
    display: flex;
    align-items: center;
    background: #20333a;
    color: #fff;
}
.taskbar button {
    width: 49px;
    height: 40px;
    display: grid;
    place-items: center;
}
.taskbar button svg {
    width: 22px;
    height: 22px;
}
.taskbar .running {
    background: linear-gradient(#76b9ed, #76b9ed) no-repeat center bottom / 40px 2px;
}
.taskbar .current {
    background-color: #4c5b61;
    background-size: 100% 2px;
}
.weather {
    display: flex;
    align-items: center;
    gap: 10px;
    margin-left: auto;
    font-size: 14px;
}
.sun {
    width: 19px;
    height: 19px;
    border-radius: 50%;
    background: radial-gradient(circle at 40% 30%, #ffb526, #f18c00);
}
.tray {
    display: flex;
    align-items: center;
    gap: 8px;
    margin-left: 15px;
    font-size: 14px;
}
.tray svg {
    width: 17px;
    height: 17px;
}
.clock {
    width: 102px;
    margin-left: 16px;
    text-align: center;
}
.clock time {
    display: block;
    line-height: 20px;
}
.notice {
    position: relative;
    width: 50px;
    padding-left: 14px;
}
.notice svg {
    width: 20px;
    height: 20px;
}
.notice b {
    position: absolute;
    top: 9px;
    left: 20px;
    padding: 0 2px;
    border-radius: 2px;
    background: #e00b0b;
    font-size: 10px;
    line-height: 12px;
}
.watermark {
    position: absolute;
    right: 22px;
    top: 8px;
    color: rgba(255, 255, 255, 0.5);
    font-size: 17px;
    line-height: 24px;
}
```
